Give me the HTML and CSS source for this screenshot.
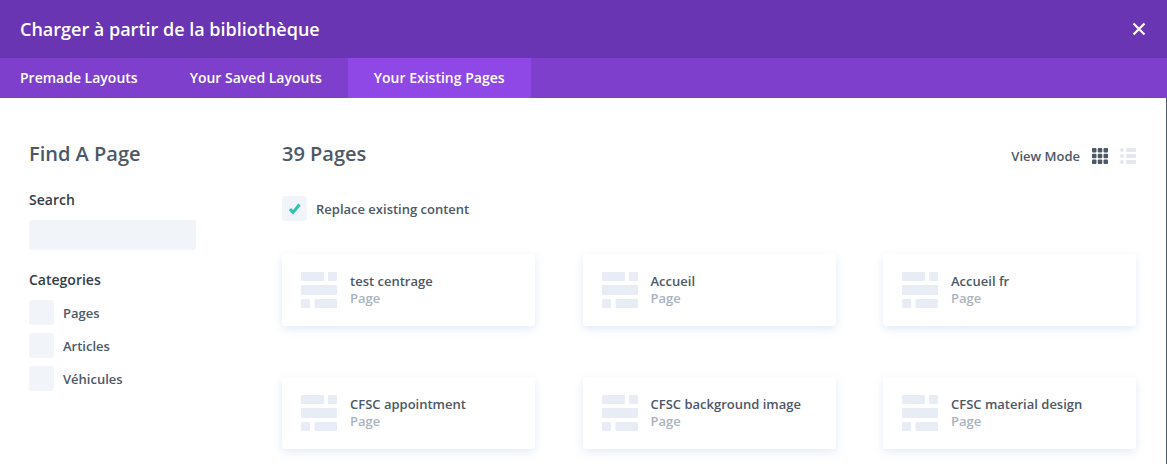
FILE: index.html
```html
<!DOCTYPE html>
<html lang="fr">
<head>
<meta charset="utf-8">
<title>Charger à partir de la bibliothèque</title>
<link rel="stylesheet" href="styles.css">
</head>
<body>
<div class="modal">
  <header class="head">
    <h1 class="title">Charger à partir de la bibliothèque</h1>
    <svg class="close" width="14" height="14" viewBox="0 0 14 14"><path d="M1.500 1.500l11 11M12.500 1.500l-11 11" stroke="#fff" stroke-width="2.200" fill="none"/></svg>
  </header>
  <nav class="tabs">
    <a class="tab">Premade Layouts</a>
    <a class="tab">Your Saved Layouts</a>
    <a class="tab active">Your Existing Pages</a>
  </nav>
  <div class="body">
    <aside class="side">
      <h2 class="h2">Find A Page</h2>
      <div class="label search-label">Search</div>
      <div class="input"></div>
      <div class="label cat-label">Categories</div>
      <ul class="cats">
        <li class="cat"><span class="box"></span>Pages</li>
        <li class="cat"><span class="box"></span>Articles</li>
        <li class="cat"><span class="box"></span>Véhicules</li>
      </ul>
    </aside>
    <main class="main">
      <div class="top">
        <h2 class="h2">39 Pages</h2>
        <div class="view">
          <span class="view-label">View Mode</span>
          <svg class="view-icon" width="16" height="16" viewBox="0 0 16 16" fill="#4c5866">
            <rect width="4.500" height="4.500" rx="1"/><rect x="5.750" width="4.500" height="4.500" rx="1"/><rect x="11.500" width="4.500" height="4.500" rx="1"/>
            <rect y="5.750" width="4.500" height="4.500" rx="1"/><rect x="5.750" y="5.750" width="4.500" height="4.500" rx="1"/><rect x="11.500" y="5.750" width="4.500" height="4.500" rx="1"/>
            <rect y="11.500" width="4.500" height="4.500" rx="1"/><rect x="5.750" y="11.500" width="4.500" height="4.500" rx="1"/><rect x="11.500" y="11.500" width="4.500" height="4.500" rx="1"/>
          </svg>
          <svg class="view-icon" width="16" height="16" viewBox="0 0 16 16" fill="#e4e7ee">
            <rect width="4" height="4" rx="2"/><rect x="6" width="10" height="4" rx="1"/>
            <rect y="6" width="4" height="4" rx="2"/><rect x="6" y="6" width="10" height="4" rx="1"/>
            <rect y="12" width="4" height="4" rx="2"/><rect x="6" y="12" width="10" height="4" rx="1"/>
          </svg>
        </div>
      </div>
      <label class="replace">
        <span class="box check"><svg width="14" height="12" viewBox="0 0 14 12"><path d="M2 6l3 3.500L11.500 1.500" stroke="#2ec4b0" stroke-width="3" fill="none"/></svg></span>
        Replace existing content
      </label>
      <div class="grid">
        <article class="card"><svg class="thumb" width="36" height="36" viewBox="0 0 36 36" fill="#e8edf5"><rect width="23" height="9" rx="1"/><rect x="27" width="9" height="9" rx="1"/><rect y="13" width="36" height="10" rx="1"/><rect y="27" width="9" height="9" rx="1"/><rect x="13.500" y="27" width="22.500" height="9" rx="1"/></svg><div><div class="name">test centrage</div><div class="type">Page</div></div></article>
        <article class="card"><svg class="thumb" width="36" height="36" viewBox="0 0 36 36" fill="#e8edf5"><rect width="23" height="9" rx="1"/><rect x="27" width="9" height="9" rx="1"/><rect y="13" width="36" height="10" rx="1"/><rect y="27" width="9" height="9" rx="1"/><rect x="13.500" y="27" width="22.500" height="9" rx="1"/></svg><div><div class="name">Accueil</div><div class="type">Page</div></div></article>
        <article class="card"><svg class="thumb" width="36" height="36" viewBox="0 0 36 36" fill="#e8edf5"><rect width="23" height="9" rx="1"/><rect x="27" width="9" height="9" rx="1"/><rect y="13" width="36" height="10" rx="1"/><rect y="27" width="9" height="9" rx="1"/><rect x="13.500" y="27" width="22.500" height="9" rx="1"/></svg><div><div class="name">Accueil fr</div><div class="type">Page</div></div></article>
        <article class="card"><svg class="thumb" width="36" height="36" viewBox="0 0 36 36" fill="#e8edf5"><rect width="23" height="9" rx="1"/><rect x="27" width="9" height="9" rx="1"/><rect y="13" width="36" height="10" rx="1"/><rect y="27" width="9" height="9" rx="1"/><rect x="13.500" y="27" width="22.500" height="9" rx="1"/></svg><div><div class="name">CFSC appointment</div><div class="type">Page</div></div></article>
        <article class="card"><svg class="thumb" width="36" height="36" viewBox="0 0 36 36" fill="#e8edf5"><rect width="23" height="9" rx="1"/><rect x="27" width="9" height="9" rx="1"/><rect y="13" width="36" height="10" rx="1"/><rect y="27" width="9" height="9" rx="1"/><rect x="13.500" y="27" width="22.500" height="9" rx="1"/></svg><div><div class="name">CFSC background image</div><div class="type">Page</div></div></article>
        <article class="card"><svg class="thumb" width="36" height="36" viewBox="0 0 36 36" fill="#e8edf5"><rect width="23" height="9" rx="1"/><rect x="27" width="9" height="9" rx="1"/><rect y="13" width="36" height="10" rx="1"/><rect y="27" width="9" height="9" rx="1"/><rect x="13.500" y="27" width="22.500" height="9" rx="1"/></svg><div><div class="name">CFSC material design</div><div class="type">Page</div></div></article>
      </div>
    </main>
  </div>
</div>
</body>
</html>
```
FILE: styles.css
```css
* { box-sizing: border-box; }
html, body { margin: 0; height: 100%; overflow: hidden; background: #fff; }
body { font-family: "Open Sans", "Liberation Sans", sans-serif; color: #4c5866; }
.modal { height: 464px; width: 1167px; display: flex; flex-direction: column; }
.head { height: 58px; flex: none; background: #6a35b2; display: flex; align-items: center; justify-content: space-between; padding: 0 21px 0 20px; }
.title { margin: 0; font-size: 18px; font-weight: 600; color: #fff; line-height: 1; }
.tabs { height: 40px; flex: none; background: #7d3fcc; display: flex; }
.tab { display: flex; align-items: center; padding: 0 26px 2px; font-size: 14px; font-weight: 600; color: #fff; }
.tab:first-child { padding-left: 20px; }
.tab.active { background: #8f48e6; }
.body { flex: 1; min-height: 0; display: flex; padding: 44px 30px 0 29px; border-right: 1px solid #4c5866; }
.side { width: 253px; flex: none; }
.main { flex: 1; min-width: 0; }
.h2 { margin: 0; font-size: 20px; font-weight: 600; line-height: 24px; color: #4c5866; }
.label { font-size: 14px; font-weight: 600; line-height: 20px; color: #333d4a; }
.search-label { margin-top: 24px; }
.input { width: 167px; height: 30px; margin-top: 10px; background: #f1f4f9; border-radius: 3px; }
.cat-label { margin-top: 20px; }
.cats { list-style: none; margin: 10px 0 0; padding: 0; display: flex; flex-direction: column; gap: 8px; }
.cat { display: flex; align-items: center; gap: 9px; font-size: 13px; font-weight: 600; color: #4c5866; }
.box { width: 25px; height: 25px; flex: none; background: #f1f4f9; border-radius: 3px; display: flex; align-items: center; justify-content: center; }
.top { display: flex; justify-content: space-between; align-items: center; }
.view { display: flex; align-items: center; padding-top: 4px; }
.view-label { font-size: 13px; font-weight: 600; margin-right: 12px; }
.view-icon + .view-icon { margin-left: 12px; }
.replace { display: flex; align-items: center; gap: 9px; margin-top: 29px; font-size: 13px; font-weight: 600; padding-top: 1px; }
.grid { display: grid; grid-template-columns: repeat(3, 253px); column-gap: 47.5px; row-gap: 51px; margin-top: 33px; }
.card { height: 72px; display: flex; align-items: center; gap: 13px; padding: 0 19px; background: #fff; border-radius: 3px; box-shadow: 0 3px 10px rgba(110, 150, 215, 0.2); }
.thumb { flex: none; }
.name { font-size: 13px; font-weight: 600; line-height: 17px; color: #4c5866; }
.type { font-size: 13px; font-weight: 600; line-height: 17px; color: #a9b2c0; }
```
